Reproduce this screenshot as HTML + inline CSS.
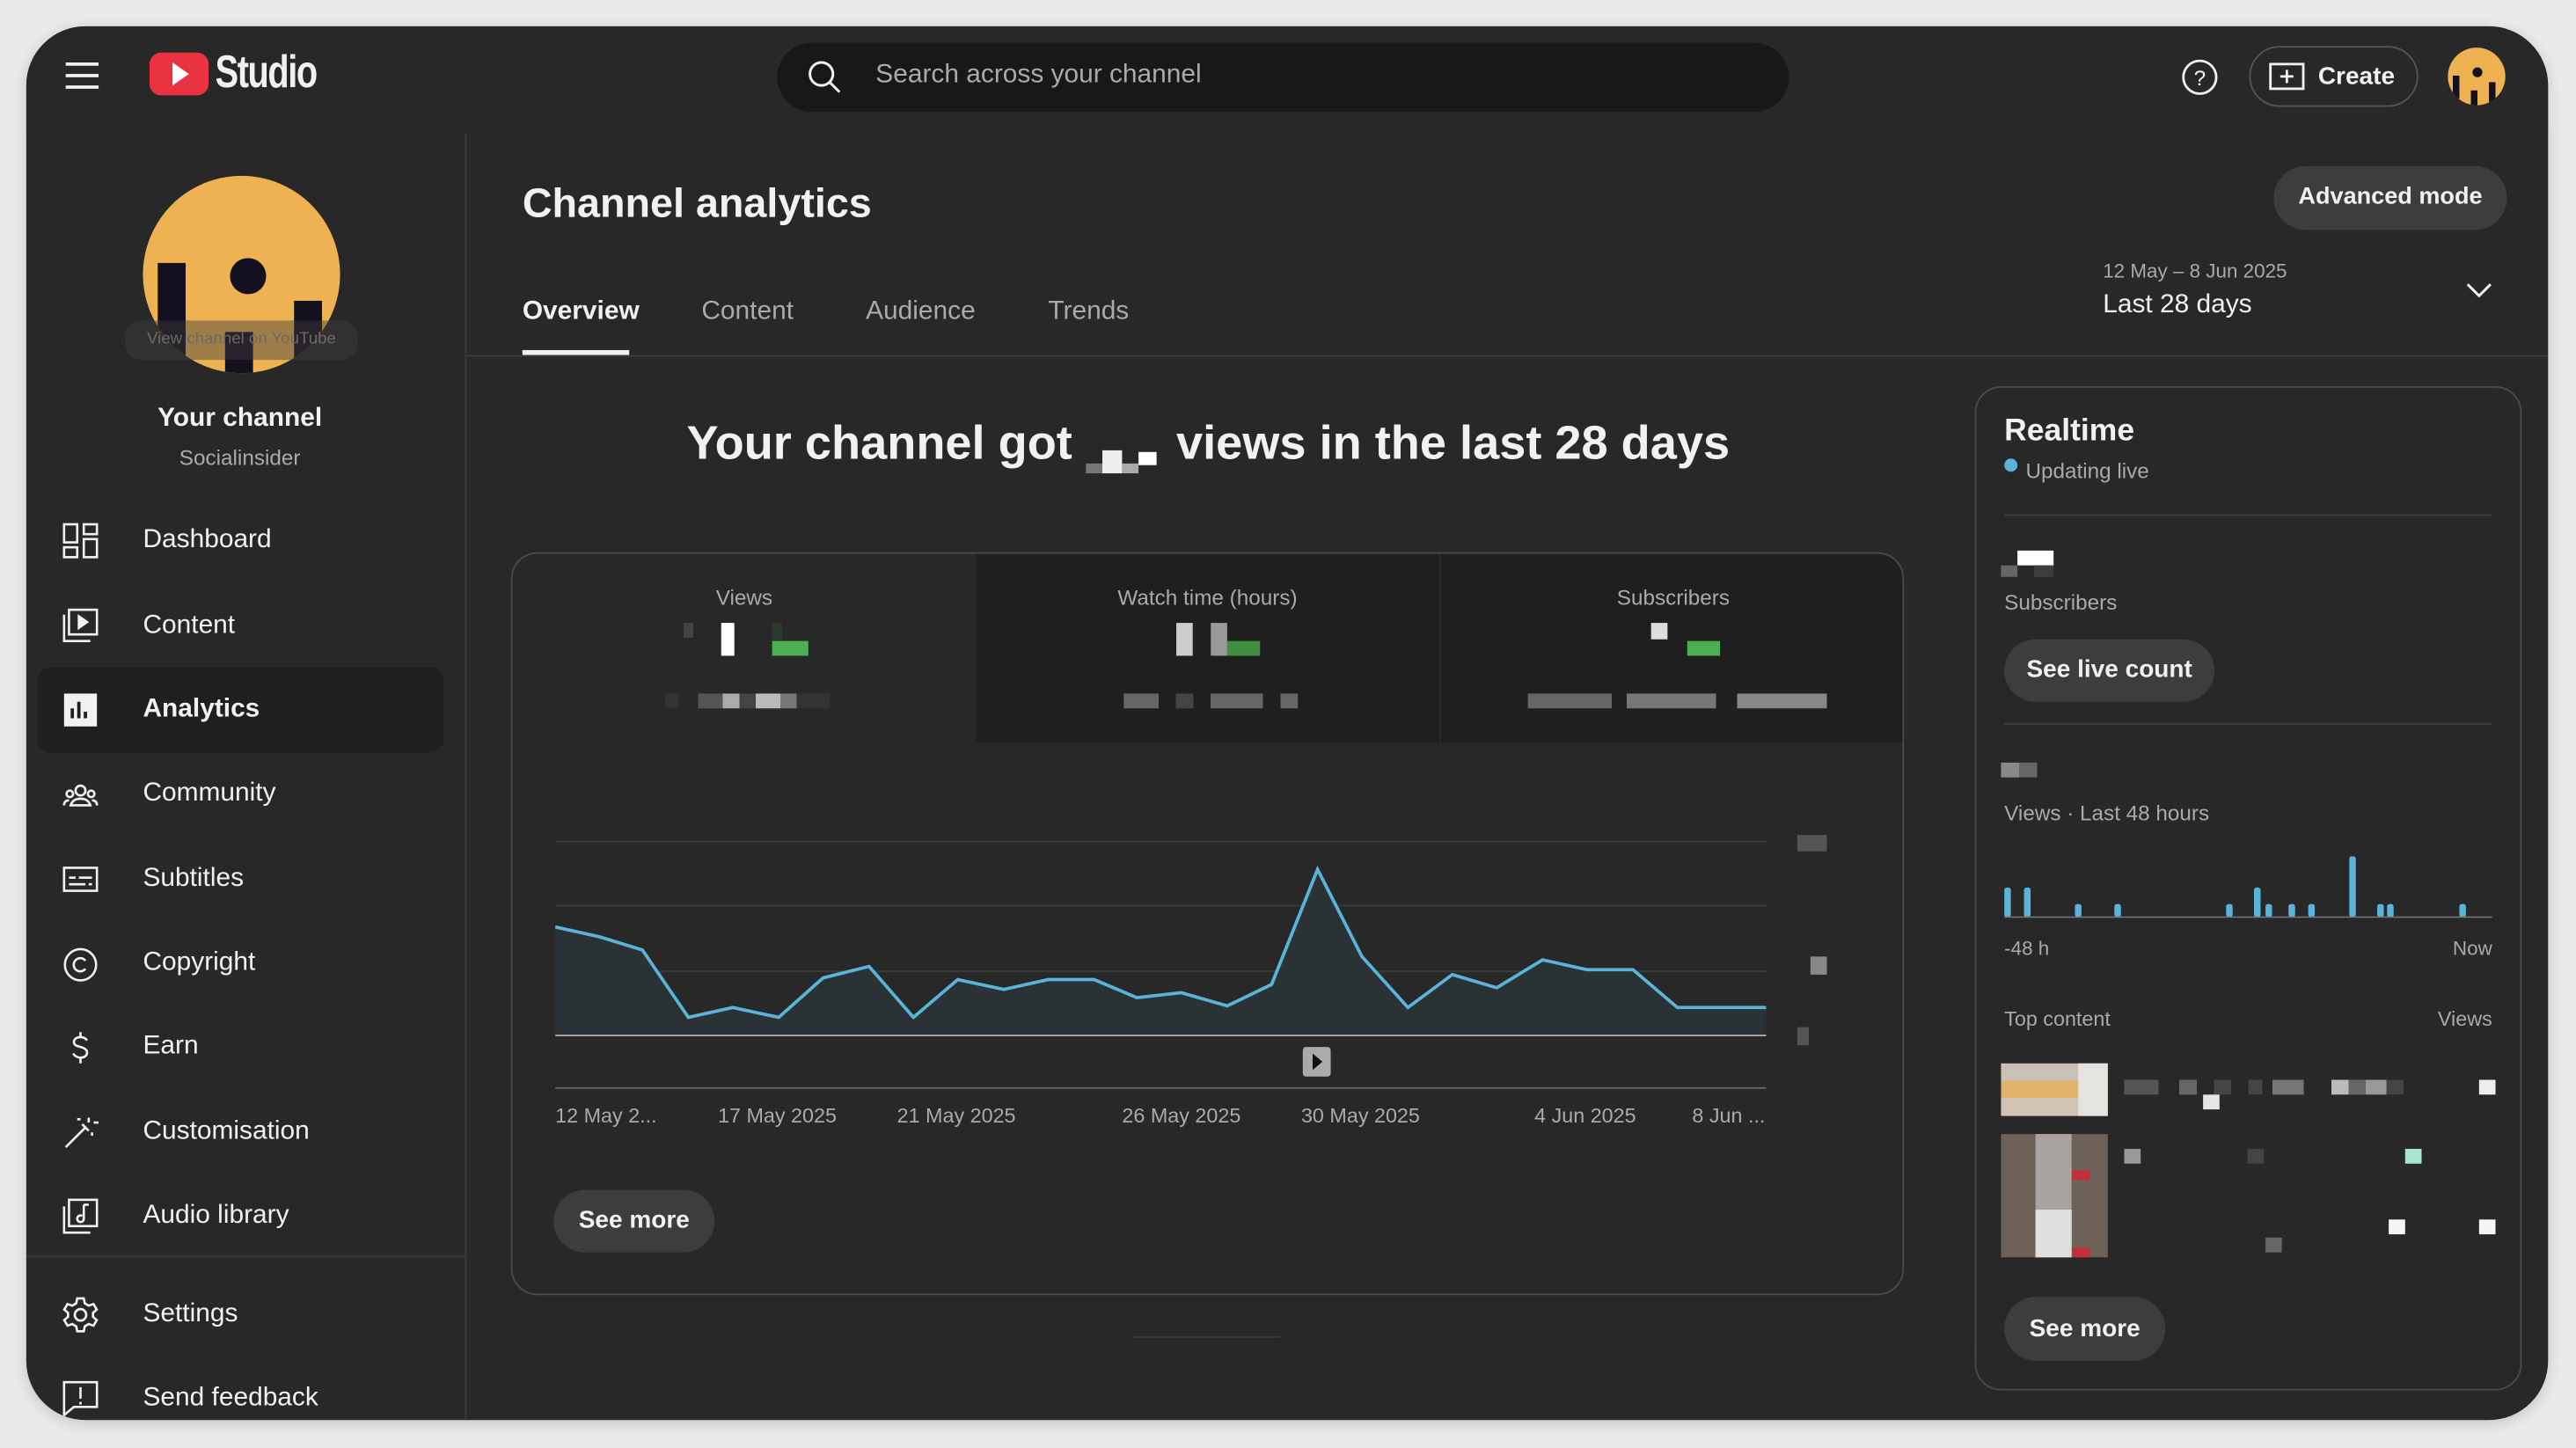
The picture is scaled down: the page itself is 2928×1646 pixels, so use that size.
<!DOCTYPE html>
<html><head><meta charset="utf-8"><style>
*{margin:0;padding:0;box-sizing:border-box}
html,body{width:2928px;height:1646px;overflow:hidden;background:#e9e9e9}
#s{position:absolute;left:0;top:0;width:1568px;height:881px;transform:scale(1.86735,1.8683);transform-origin:0 0;font-family:"Liberation Sans",sans-serif;color:#f1f1f1}
.a{position:absolute}
.win{left:16px;top:16px;width:1535px;height:848px;background:#282828;border-radius:36px;overflow:hidden;box-shadow:0 2px 8px rgba(0,0,0,.15)}
.hdr{left:0;top:0;width:1535px;height:65px;background:#282828}
.nav{font-size:16px;color:#f1f1f1}
.nav .i{position:absolute;left:22px;width:22px;height:22px}
.nav .t{position:absolute;left:71px}
.btn{background:#3d3d3d;border-radius:20px;font-size:15px;font-weight:bold;color:#f1f1f1;text-align:center}
.px{position:absolute}
.lbl{font-size:13px;color:#aaa}
.date{font-size:12.5px;color:#aaa;top:671px}
</style></head><body><div id="s">
<div class="a win">
 <div class="a hdr"></div>
 <div class="a" style="left:24px;top:22px;width:20px;height:2px;background:#f1f1f1"></div>
 <div class="a" style="left:24px;top:29px;width:20px;height:2px;background:#f1f1f1"></div>
 <div class="a" style="left:24px;top:36px;width:20px;height:2px;background:#f1f1f1"></div>
 <div class="a" style="left:75px;top:16px;width:36px;height:26px;background:#ea3340;border-radius:7px"></div>
 <div class="a" style="left:89px;top:22px;width:0;height:0;border-left:10px solid #fff;border-top:7px solid transparent;border-bottom:7px solid transparent"></div>
 <div class="a" style="left:115px;top:12px;font-size:28px;font-weight:bold;letter-spacing:-1px;transform:scaleX(.76);transform-origin:0 0">Studio</div>
 <div class="a" style="left:457px;top:10px;width:616px;height:42px;background:#181818;border-radius:21px"></div>
 <svg class="a" style="left:475px;top:20px" width="22" height="22" viewBox="0 0 22 22"><circle cx="9" cy="9" r="7" fill="none" stroke="#f1f1f1" stroke-width="1.6"/><line x1="14" y1="14" x2="20" y2="20" stroke="#f1f1f1" stroke-width="1.6"/></svg>
 <div class="a" style="left:517px;top:21px;font-size:16px;color:#aaa">Search across your channel</div>
 <svg class="a" style="left:1311px;top:19px" width="24" height="24" viewBox="0 0 24 24"><circle cx="12" cy="12" r="10" fill="none" stroke="#f1f1f1" stroke-width="1.5"/><text x="12" y="17" font-size="13" text-anchor="middle" fill="#f1f1f1" font-family="Liberation Sans">?</text></svg>
 <div class="a" style="left:1353px;top:12px;width:103px;height:37px;border:1px solid #555;border-radius:19px"></div>
 <svg class="a" style="left:1365px;top:22px" width="22" height="17" viewBox="0 0 22 17"><rect x="1" y="1" width="20" height="15" fill="none" stroke="#f1f1f1" stroke-width="1.5"/><path d="M7 8.5h8M11 4.5v8" stroke="#f1f1f1" stroke-width="1.5"/></svg>
 <div class="a" style="left:1395px;top:22px;font-size:15px;font-weight:bold">Create</div>
 <div class="a" style="left:1474px;top:13px;width:35px;height:35px;border-radius:50%;background:#efb253;overflow:hidden"><div class="a" style="left:15px;top:12px;width:6px;height:6px;border-radius:50%;background:#14101f"></div><div class="a" style="left:3px;top:17px;width:4px;height:14px;background:#14101f"></div><div class="a" style="left:14px;top:26px;width:4px;height:10px;background:#14101f"></div><div class="a" style="left:25px;top:21px;width:4px;height:12px;background:#14101f"></div></div>

 <div class="a" style="left:267px;top:65px;width:1px;height:783px;background:#3a3a3a"></div>
 <div class="a" style="left:71px;top:91px;width:120px;height:120px;border-radius:50%;background:#efb253;overflow:hidden">
  <div class="a" style="left:53px;top:50px;width:22px;height:22px;border-radius:50%;background:#14101f"></div>
  <div class="a" style="left:9px;top:53px;width:17px;height:80px;background:#14101f"></div>
  <div class="a" style="left:50px;top:95px;width:17px;height:40px;background:#14101f"></div>
  <div class="a" style="left:92px;top:76px;width:17px;height:50px;background:#14101f"></div>
 </div>
 <div class="a" style="left:60px;top:179px;width:142px;height:24px;border-radius:10px;background:rgba(60,60,60,.45);font-size:10px;color:#6f6a60;text-align:center;line-height:24px">View channel on YouTube</div>
 <div class="a" style="left:0;top:230px;width:260px;text-align:center;font-size:16px;font-weight:bold">Your channel</div>
 <div class="a" style="left:0;top:255px;width:260px;text-align:center;font-size:13px;color:#aaa">Socialinsider</div>
 <div class="a" style="left:7px;top:390px;width:247px;height:52px;background:#1f1f1f;border-radius:8px"></div>
 <div class="a nav" style="left:0;top:0;width:267px;height:848px">
  <svg class="i" style="top:302px" viewBox="0 0 22 22" fill="none" stroke="#f1f1f1" stroke-width="1.4"><rect x="1" y="1" width="8" height="11"/><rect x="13" y="1" width="8" height="6"/><rect x="1" y="15" width="8" height="6"/><rect x="13" y="10" width="8" height="11"/></svg><div class="t" style="top:304px">Dashboard</div>
  <svg class="i" style="top:353px" viewBox="0 0 22 22" fill="none" stroke="#f1f1f1" stroke-width="1.4"><rect x="4" y="2" width="17" height="15"/><path d="M1 5v16h16"/><path d="M10 6l5 3.5-5 3.5z" fill="#f1f1f1"/></svg><div class="t" style="top:356px">Content</div>
  <svg class="i" style="top:405px" viewBox="0 0 22 22"><rect x="1" y="1" width="20" height="20" fill="#f1f1f1"/><path d="M6 16V10M10 16V6M14 16v-4" stroke="#1f1f1f" stroke-width="2"/></svg><div class="t" style="top:407px;font-weight:bold">Analytics</div>
  <svg class="i" style="top:457px" viewBox="0 0 22 22" fill="none" stroke="#f1f1f1" stroke-width="1.4"><circle cx="11" cy="8" r="3"/><circle cx="4.5" cy="10" r="2"/><circle cx="17.5" cy="10" r="2"/><path d="M5 17c1-3 3-4 6-4s5 1 6 4zM1 17c0-2 1-3 3-3M21 17c0-2-1-3-3-3"/></svg><div class="t" style="top:458px">Community</div>
  <svg class="i" style="top:508px" viewBox="0 0 22 22" fill="none" stroke="#f1f1f1" stroke-width="1.4"><rect x="1" y="4" width="20" height="14"/><path d="M4 10h4M10 10h8M4 14h10M16 14h2"/></svg><div class="t" style="top:510px">Subtitles</div>
  <svg class="i" style="top:560px" viewBox="0 0 22 22" fill="none" stroke="#f1f1f1" stroke-width="1.4"><circle cx="11" cy="11" r="9.5"/><path d="M14 8.5a4 4 0 1 0 0 5"/></svg><div class="t" style="top:561px">Copyright</div>
  <svg class="i" style="top:611px" viewBox="0 0 22 22" fill="none" stroke="#f1f1f1" stroke-width="1.4"><path d="M15 6c-1-1.5-2.5-2-4-2-2 0-4 1-4 3s2 2.5 4 3 4 1.5 4 3.5-2 3-4 3c-2 0-3.5-1-4.5-2.5M11 1v3M11 16v4"/></svg><div class="t" style="top:612px">Earn</div>
  <svg class="i" style="top:662px" viewBox="0 0 22 22" fill="none" stroke="#f1f1f1" stroke-width="1.4"><path d="M2 20L14 8M12 6l4 4M16 2v3M19 5h3M18 11v2M9 3h2"/></svg><div class="t" style="top:664px">Customisation</div>
  <svg class="i" style="top:713px" viewBox="0 0 22 22" fill="none" stroke="#f1f1f1" stroke-width="1.4"><rect x="4" y="1" width="17" height="16"/><path d="M1 5v16h16"/><path d="M13 4v8.5a2 2 0 1 1-1-1.7M13 4h3"/></svg><div class="t" style="top:715px">Audio library</div>
  <div class="a" style="left:0;top:748px;width:267px;height:1px;background:#3a3a3a"></div>
  <svg class="i" style="top:773px" viewBox="0 0 22 22" fill="none" stroke="#f1f1f1" stroke-width="1.4"><circle cx="11" cy="11" r="3.5"/><path d="M9 1h4l.6 3 2.4 1.4 2.9-1 2 3.4-2.3 2v2.4l2.3 2-2 3.4-2.9-1L13.6 18 13 21H9l-.6-3L6 16.6l-2.9 1-2-3.4 2.3-2V9.8L1.1 7.8l2-3.4 2.9 1L8.4 4z"/></svg><div class="t" style="top:775px">Settings</div>
  <svg class="i" style="top:824px" viewBox="0 0 22 22" fill="none" stroke="#f1f1f1" stroke-width="1.4"><path d="M1 1h20v15H7l-6 5z"/><path d="M11 4v7M11 13v1.5"/></svg><div class="t" style="top:826px">Send feedback</div>
 </div>

 <div class="a" style="left:302px;top:94px;font-size:25px;font-weight:bold">Channel analytics</div>
 <div class="a btn" style="left:1368px;top:85px;width:142px;height:39px;line-height:39px;font-size:14.5px">Advanced mode</div>
 <div class="a" style="left:302px;top:165px;font-size:16px;font-weight:bold">Overview</div>
 <div class="a" style="left:411px;top:165px;font-size:16px;color:#aaa">Content</div>
 <div class="a" style="left:511px;top:165px;font-size:16px;color:#aaa">Audience</div>
 <div class="a" style="left:622px;top:165px;font-size:16px;color:#aaa">Trends</div>
 <div class="a" style="left:302px;top:197px;width:65px;height:3px;background:#f1f1f1"></div>
 <div class="a" style="left:268px;top:200px;width:1267px;height:1px;background:#3a3a3a"></div>
 <div class="a" style="left:1264px;top:142px;font-size:12px;color:#aaa">12 May – 8 Jun 2025</div>
 <div class="a" style="left:1264px;top:161px;font-size:16px">Last 28 days</div>
 <svg class="a" style="left:1485px;top:156px" width="16" height="10" viewBox="0 0 16 10"><path d="M1 1l7 7 7-7" fill="none" stroke="#f1f1f1" stroke-width="1.6"/></svg>

 <div class="a" style="left:402px;top:238px;font-size:29px;font-weight:bold">Your channel got</div>
 <div class="px" style="left:645px;top:266px;width:10px;height:6px;background:#777"></div><div class="px" style="left:655px;top:258px;width:12px;height:14px;background:#eee"></div><div class="px" style="left:667px;top:266px;width:10px;height:6px;background:#aaa"></div><div class="px" style="left:677px;top:259px;width:11px;height:8px;background:#fff"></div>
 <div class="a" style="left:700px;top:238px;font-size:29px;font-weight:bold">views in the last 28 days</div>

 <div class="a" style="left:295px;top:320px;width:848px;height:452px;border:1px solid #4a4a4a;border-radius:16px;overflow:hidden">
  <div class="a" style="left:282px;top:0;width:566px;height:115px;background:#1f1f1f"></div>
  <div class="a" style="left:564px;top:0;width:1px;height:115px;background:#2c2c2c"></div>
  <div class="a lbl" style="left:0;top:19px;width:282px;text-align:center">Views</div>
  <div class="a lbl" style="left:282px;top:19px;width:282px;text-align:center">Watch time (hours)</div>
  <div class="a lbl" style="left:565px;top:19px;width:283px;text-align:center">Subscribers</div>
  <div class="px" style="left:104px;top:42px;width:6px;height:9px;background:#444"></div><div class="px" style="left:127px;top:42px;width:8px;height:20px;background:#fff"></div><div class="px" style="left:158px;top:53px;width:22px;height:9px;background:#4caf50"></div><div class="px" style="left:158px;top:42px;width:6px;height:11px;background:#2a3a2a"></div>
  <div class="px" style="left:93px;top:85px;width:100px;height:9px;background:linear-gradient(90deg,#333 0 8%,transparent 8% 20%,#555 20% 35%,#aaa 35% 45%,#444 45% 55%,#bbb 55% 70%,#777 70% 80%,#333 80%)"></div>
  <div class="px" style="left:404px;top:42px;width:10px;height:20px;background:#ccc"></div><div class="px" style="left:425px;top:42px;width:10px;height:20px;background:#999"></div><div class="px" style="left:435px;top:53px;width:20px;height:9px;background:#3f8f3f"></div>
  <div class="px" style="left:372px;top:85px;width:106px;height:9px;background:linear-gradient(90deg,#666 0 20%,transparent 20% 30%,#444 30% 40%,transparent 40% 50%,#666 50% 80%,transparent 80% 90%,#666 90%)"></div>
  <div class="px" style="left:693px;top:42px;width:10px;height:10px;background:#ddd"></div><div class="px" style="left:715px;top:53px;width:20px;height:9px;background:#4caf50"></div>
  <div class="px" style="left:618px;top:85px;width:182px;height:9px;background:linear-gradient(90deg,#666 0 28%,transparent 28% 33%,#777 33% 63%,transparent 63% 70%,#888 70%)"></div>
  <svg class="a" style="left:0;top:0" width="848" height="452" viewBox="295 320 848 452">
   <g stroke="#3a3a3a" stroke-width="1"><line x1="321" y1="495" x2="1058" y2="495"/><line x1="321" y1="534" x2="1058" y2="534"/><line x1="321" y1="574" x2="1058" y2="574"/></g>
   <path d="M321 547L348 553L374 561L402 602L429 596L457 602L484 578L512 571L539 602L566 579L594 585L621 579L649 579L675 590L702 587L730 595L757 582L785 512L812 565L840 596L867 576L894 584L922 567L949 573L977 573L1004 596L1058 596L1058 613L321 613Z" fill="#2b3236"/>
   <path d="M321 547L348 553L374 561L402 602L429 596L457 602L484 578L512 571L539 602L566 579L594 585L621 579L649 579L675 590L702 587L730 595L757 582L785 512L812 565L840 596L867 576L894 584L922 567L949 573L977 573L1004 596L1058 596" fill="none" stroke="#5ab3d9" stroke-width="2"/>
   <line x1="321" y1="613" x2="1058" y2="613" stroke="#aaa" stroke-width="1"/>
   <line x1="321" y1="645" x2="1058" y2="645" stroke="#666" stroke-width="1"/>
   <rect x="1077" y="491" width="18" height="10" fill="#555"/><rect x="1085" y="565" width="10" height="11" fill="#888"/><rect x="1077" y="608" width="7" height="11" fill="#555"/>
   <rect x="776" y="620" width="17" height="18" rx="2" fill="#aaa"/><path d="M782 624l6 5-6 5z" fill="#111"/>
  </svg>
  <div class="a date" style="left:26px;top:335px">12 May 2...</div>
  <div class="a date" style="left:125px;top:335px">17 May 2025</div>
  <div class="a date" style="left:234px;top:335px">21 May 2025</div>
  <div class="a date" style="left:371px;top:335px">26 May 2025</div>
  <div class="a date" style="left:480px;top:335px">30 May 2025</div>
  <div class="a date" style="left:622px;top:335px">4 Jun 2025</div>
  <div class="a date" style="left:718px;top:335px">8 Jun ...</div>
  <div class="a btn" style="left:25px;top:387px;width:98px;height:38px;line-height:38px">See more</div>
 </div>
 <div class="a" style="left:673px;top:797px;width:90px;height:1px;background:#3a3a3a"></div>

 <div class="a" style="left:1186px;top:219px;width:333px;height:611px;border:1px solid #4a4a4a;border-radius:16px">
  <div class="a" style="left:17px;top:16px;font-size:19px;font-weight:bold">Realtime</div>
  <div class="a" style="left:17px;top:43px;width:8px;height:8px;border-radius:50%;background:#5ab3d9"></div>
  <div class="a lbl" style="left:30px;top:43px">Updating live</div>
  <div class="a" style="left:17px;top:77px;width:297px;height:1px;background:#3d3d3d"></div>
  <div class="px" style="left:25px;top:99px;width:22px;height:9px;background:#fff"></div><div class="px" style="left:15px;top:108px;width:10px;height:7px;background:#666"></div><div class="px" style="left:35px;top:108px;width:12px;height:7px;background:#3d3d3d"></div>
  <div class="a lbl" style="left:17px;top:123px">Subscribers</div>
  <div class="a btn" style="left:17px;top:153px;width:128px;height:38px;line-height:38px">See live count</div>
  <div class="a" style="left:17px;top:204px;width:297px;height:1px;background:#3d3d3d"></div>
  <div class="px" style="left:15px;top:228px;width:22px;height:9px;background:linear-gradient(90deg,#888 50%,#666 50%)"></div>
  <div class="a lbl" style="left:17px;top:251px">Views · Last 48 hours</div>
  <svg class="a" style="left:15px;top:280px" width="300" height="45" viewBox="0 0 300 45">
   <g fill="#5ab3d9"><rect x="2" y="24" width="4" height="18" rx="1.5"/><rect x="14" y="24" width="4" height="18" rx="1.5"/><rect x="45" y="34" width="4" height="8" rx="1.5"/><rect x="69" y="34" width="4" height="8" rx="1.5"/><rect x="137" y="34" width="4" height="8" rx="1.5"/><rect x="154" y="24" width="4" height="18" rx="1.5"/><rect x="161" y="34" width="4" height="8" rx="1.5"/><rect x="175" y="34" width="4" height="8" rx="1.5"/><rect x="187" y="34" width="4" height="8" rx="1.5"/><rect x="212" y="5" width="4" height="37" rx="1.5"/><rect x="229" y="34" width="4" height="8" rx="1.5"/><rect x="235" y="34" width="4" height="8" rx="1.5"/><rect x="279" y="34" width="4" height="8" rx="1.5"/></g>
   <line x1="2" y1="42" x2="299" y2="42" stroke="#777" stroke-width="0.8"/>
  </svg>
  <div class="a" style="left:17px;top:334px;font-size:12px;color:#aaa">-48 h</div>
  <div class="a" style="right:17px;top:334px;font-size:12px;color:#aaa">Now</div>
  <div class="a" style="left:17px;top:377px;font-size:12.5px;color:#aaa">Top content</div>
  <div class="a" style="right:17px;top:377px;font-size:12.5px;color:#aaa">Views</div>
  <div class="px" style="left:15px;top:411px;width:65px;height:32px;background:linear-gradient(180deg,#c9c0b8 0 33%,#e2b36b 33% 66%,#d1c3b5 66%)"></div>
  <div class="px" style="left:62px;top:411px;width:18px;height:32px;background:#e3e3df"></div>
  <div class="px" style="left:15px;top:454px;width:65px;height:75px;background:#6e6258"></div>
  <div class="px" style="left:36px;top:454px;width:22px;height:75px;background:#a8a39e"></div>
  <div class="px" style="left:58px;top:476px;width:11px;height:6px;background:#c0303a"></div>
  <div class="px" style="left:58px;top:523px;width:11px;height:6px;background:#c0303a"></div>
  <div class="px" style="left:36px;top:500px;width:22px;height:29px;background:#dde0dc"></div>
  <div class="px" style="left:90px;top:421px;width:210px;height:9px;background:linear-gradient(90deg,#555 0 10%,transparent 10% 16%,#666 16% 21%,transparent 21% 26%,#444 26% 31%,transparent 31% 36%,#444 36% 40%,transparent 40% 43%,#777 43% 52%,transparent 52% 60%,#bbb 60% 65%,#666 65% 70%,#999 70% 76%,#444 76% 81%,transparent 81%)"></div>
  <div class="px" style="left:306px;top:421px;width:10px;height:9px;background:#eee"></div>
  <div class="px" style="left:138px;top:430px;width:10px;height:9px;background:#e5e5e5"></div>
  <div class="px" style="left:90px;top:463px;width:10px;height:9px;background:#999"></div>
  <div class="px" style="left:165px;top:463px;width:10px;height:9px;background:#444"></div>
  <div class="px" style="left:261px;top:463px;width:10px;height:9px;background:#a8e6cf"></div>
  <div class="px" style="left:251px;top:506px;width:10px;height:9px;background:#f5f5f5"></div>
  <div class="px" style="left:306px;top:506px;width:10px;height:9px;background:#f5f5f5"></div>
  <div class="px" style="left:176px;top:517px;width:10px;height:9px;background:#666"></div>
  <div class="a btn" style="left:17px;top:553px;width:98px;height:39px;line-height:39px">See more</div>
 </div>
</div>
</div></body></html>
